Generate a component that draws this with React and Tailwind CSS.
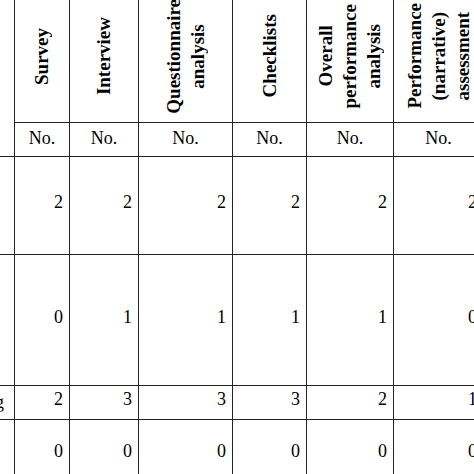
import React from "react";

const cols = [
  { w: "w-[55px]", lines: ["Survey"] },
  { w: "w-[69px]", lines: ["Interview"] },
  { w: "w-[94px]", lines: ["Questionnaire", "analysis"] },
  { w: "w-[74px]", lines: ["Checklists"] },
  { w: "w-[87px]", lines: ["Overall", "performance", "analysis"] },
  { w: "w-[90px]", lines: ["Performance", "(narrative)", "assessment"] },
];

const rows = [
  { label: "Staff recruitment and selection", h: "h-[98px]", values: [2, 2, 2, 2, 2, 2] },
  { label: "Staff appraisal and performance management", h: "h-[131px]", values: [0, 1, 1, 1, 1, 0] },
  { label: "Monitoring", h: "h-[33px]", values: [2, 3, 3, 3, 2, 1] },
  { label: "Evaluation", h: "h-[70px]", values: [0, 0, 0, 0, 0, 0] },
];

const cell = "border-[1.5px] border-[#222]";

export default function App() {
  return (
    <div className="w-[474px] h-[474px] overflow-hidden bg-white text-black font-['Liberation_Serif','Times_New_Roman',serif]">
      <table className="table-fixed border-collapse w-[569px] -mt-[11px] -ml-[86px]">
        <colgroup>
          <col className="w-[100px]" />
          {cols.map((c, i) => (
            <col key={i} className={c.w} />
          ))}
        </colgroup>
        <thead>
          <tr>
            <th rowSpan={2} className={`${cell} font-normal`}></th>
            {cols.map((c, i) => (
              <th key={i} className={`${cell} p-0`}>
                <div className="h-[132px] flex items-center justify-center">
                  <span className="[writing-mode:vertical-rl] rotate-180 text-[19px] leading-[24px] font-bold text-center whitespace-nowrap">
                    {c.lines.map((l, j) => (
                      <span key={j} className="block">{l}</span>
                    ))}
                  </span>
                </div>
              </th>
            ))}
          </tr>
          <tr className="h-[34px]">
            {cols.map((c, i) => (
              <th key={i} className={`${cell} font-normal text-[18px] text-center p-0 pb-[2px]`}>No.</th>
            ))}
          </tr>
        </thead>
        <tbody>
          {rows.map((r, i) => (
            <tr key={i} className={r.h}>
              <td className={`${cell} text-right pr-[10px] text-[18px] whitespace-nowrap overflow-hidden align-middle`}>
                {i === 2 ? r.label : ""}
              </td>
              {r.values.map((v, j) => (
                <td key={j} className={`${cell} text-right pr-[6px] pb-[6px] text-[18px] align-middle`}>{v}</td>
              ))}
            </tr>
          ))}
        </tbody>
      </table>
    </div>
  );
}
